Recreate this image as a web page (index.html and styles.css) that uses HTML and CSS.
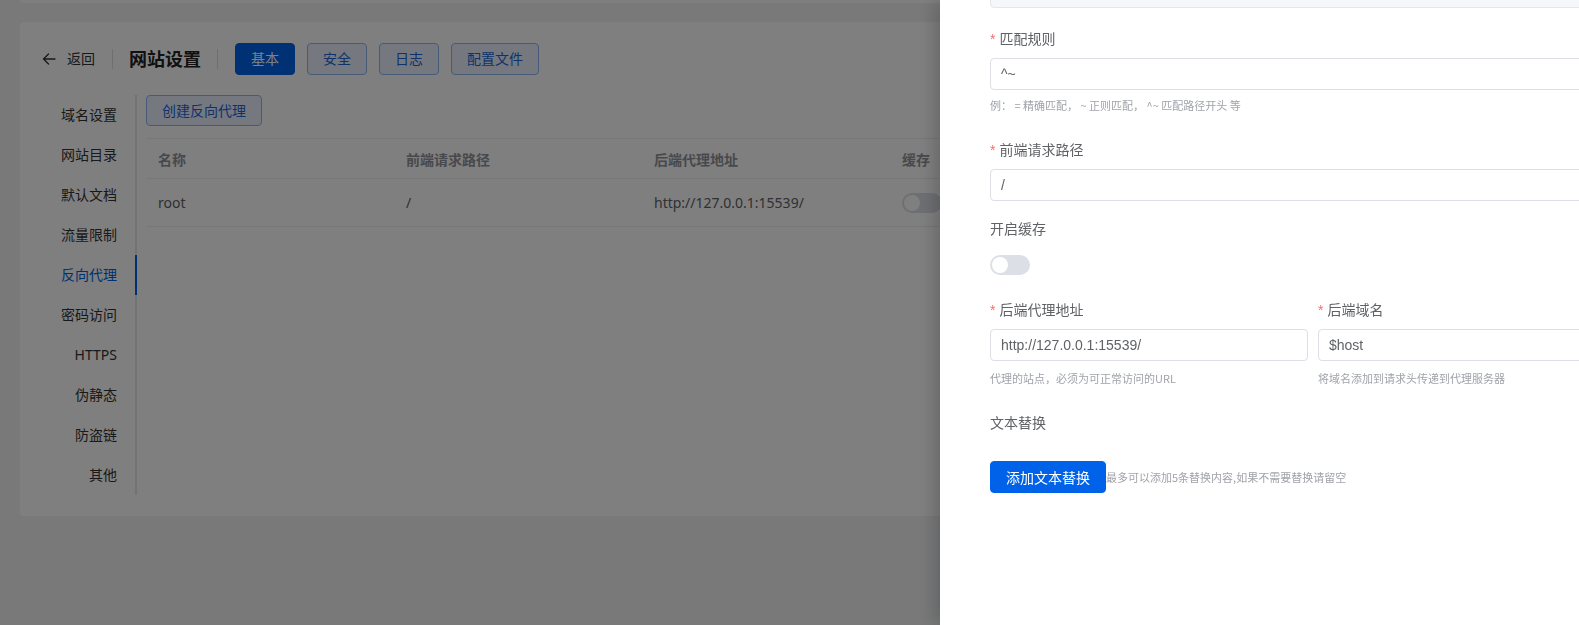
FILE: index.html
```html
<!DOCTYPE html>
<html lang="zh-CN">
<head>
<meta charset="utf-8">
<title>网站设置</title>
<link rel="stylesheet" href="styles.css">
</head>
<body>
<div class="page">
  <div class="card card-top"></div>
  <div class="card main">
    <div class="header">
      <a class="back">
        <svg class="back-icon" width="14" height="14" viewBox="0 0 14 14"><path d="M13 7H1.5M6.5 2L1.5 7l5 5" fill="none" stroke="currentColor" stroke-width="1.3" stroke-linecap="round" stroke-linejoin="round"/></svg>
        <span>返回</span>
      </a>
      <span class="vdiv"></span>
      <h1 class="title">网站设置</h1>
      <span class="vdiv vdiv-2"></span>
      <div class="tabs">
        <button class="btn btn-primary">基本</button>
        <button class="btn btn-plain">安全</button>
        <button class="btn btn-plain">日志</button>
        <button class="btn btn-plain">配置文件</button>
      </div>
    </div>
    <div class="body">
      <ul class="side-menu">
        <li>域名设置</li>
        <li>网站目录</li>
        <li>默认文档</li>
        <li>流量限制</li>
        <li class="active">反向代理</li>
        <li>密码访问</li>
        <li>HTTPS</li>
        <li>伪静态</li>
        <li>防盗链</li>
        <li>其他</li>
      </ul>
      <div class="content">
        <button class="btn btn-plain btn-create">创建反向代理</button>
        <table class="table">
          <thead>
            <tr><th>名称</th><th>前端请求路径</th><th>后端代理地址</th><th>缓存</th><th>操作</th></tr>
          </thead>
          <tbody>
            <tr><td>root</td><td>/</td><td>http://127.0.0.1:15539/</td><td><span class="switch"></span></td><td></td></tr>
          </tbody>
        </table>
      </div>
    </div>
  </div>
</div>
<div class="mask"></div>
<aside class="drawer">
  <div class="drawer-body">
    <div class="form-item item-scrolled">
      <div class="input input-disabled"></div>
    </div>
    <div class="form-item has-hint">
      <div class="label"><span class="star">*</span>匹配规则</div>
      <div class="input">^~</div>
      <div class="hint hint-first">例： = 精确匹配， ~ 正则匹配， ^~ 匹配路径开头 等</div>
    </div>
    <div class="form-item item-path">
      <div class="label"><span class="star">*</span>前端请求路径</div>
      <div class="input">/</div>
    </div>
    <div class="form-item item-switch">
      <div class="label">开启缓存</div>
      <span class="switch switch-drawer"></span>
    </div>
    <div class="form-row has-hint">
      <div class="form-col">
        <div class="label"><span class="star">*</span>后端代理地址</div>
        <div class="input">http://127.0.0.1:15539/</div>
        <div class="hint hint-row">代理的站点，必须为可正常访问的URL</div>
      </div>
      <div class="form-col">
        <div class="label"><span class="star">*</span>后端域名</div>
        <div class="input">$host</div>
        <div class="hint hint-row">将域名添加到请求头传递到代理服务器</div>
      </div>
    </div>
    <div class="form-item">
      <div class="label label-replace">文本替换</div>
      <div class="replace-row">
        <button class="btn btn-primary btn-add">添加文本替换</button>
        <span class="hint-inline">最多可以添加5条替换内容,如果不需要替换请留空</span>
      </div>
    </div>
  </div>
</aside>
</body>
</html>
```
FILE: styles.css
```css
html, body {
  margin: 0;
  padding: 0;
  height: 625px;
  overflow: hidden;
}
body {
  background: #f2f3f5;
  font-family: "Noto Sans", "Noto Sans CJK SC", sans-serif;
  font-size: 14px;
  color: #333;
}
ul { margin: 0; padding: 0; list-style: none; }

.page {
  padding: 0 20px;
}
.card {
  background: #fff;
  border-radius: 4px;
}
.card-top {
  height: 3px;
  border-radius: 0 0 4px 4px;
  margin-bottom: 19px;
}
.main {
  padding: 21px 22px 21px 22px;
}

/* header */
.header {
  display: flex;
  align-items: center;
  height: 32px;
}
.back {
  display: flex;
  align-items: center;
  gap: 11px;
  color: #333;
  font-size: 14px;
  line-height: 20px;
}
.back-icon { display: block; }
.vdiv {
  width: 1px;
  height: 20px;
  background: #dcdfe6;
  margin: 0 16px 0 17px;
}
.vdiv-2 { margin: 0 17px 0 16px; }
.title {
  margin: 0;
  font-size: 18px;
  font-weight: 700;
  color: #222;
  line-height: 24px;
}
.tabs {
  display: flex;
  gap: 12px;
}
.btn {
  height: 32px;
  padding: 0 15px;
  border-radius: 4px;
  font-family: "Noto Sans", "Noto Sans CJK SC", sans-serif;
  font-size: 14px;
  border: 1px solid transparent;
  cursor: pointer;
  line-height: 30px;
}
.btn-primary {
  background: #0062e8;
  border-color: #0062e8;
  color: #fff;
}
.btn-plain {
  background: #eaf2fe;
  border-color: #8fb6f3;
  color: #1b64d8;
}

/* body */
.body {
  display: flex;
  margin-top: 20px;
}
.side-menu {
  width: 93px;
  border-right: 2px solid #e4e7ed;
}
.side-menu li {
  height: 40px;
  line-height: 40px;
  text-align: right;
  padding-right: 18px;
  margin-right: -2px;
  border-right: 2px solid transparent;
  color: #333;
  white-space: nowrap;
}
.side-menu li.active {
  color: #0062e8;
  border-right-color: #0062e8;
}
.content {
  flex: 1;
  margin-left: 9px;
}
.btn-create {
  height: 31px;
  line-height: 29px;
}
.table {
  margin-top: 12px;
  width: 1240px;
  border-collapse: collapse;
  table-layout: fixed;
}
.table th, .table td {
  width: 248px;
  padding: 0 12px;
  text-align: left;
  box-sizing: border-box;
}
.table th {
  height: 40px;
  border-top: 1px solid #ebeef5;
  border-bottom: 1px solid #ebeef5;
  color: #909399;
  font-weight: 600;
}
.table td {
  height: 48px;
  border-bottom: 1px solid #ebeef5;
  color: #606266;
}
.switch {
  display: inline-block;
  position: relative;
  width: 40px;
  height: 20px;
  border-radius: 10px;
  background: #dcdfe6;
  vertical-align: middle;
}
.switch::after {
  content: "";
  position: absolute;
  left: 2px;
  top: 2px;
  width: 16px;
  height: 16px;
  border-radius: 50%;
  background: #fff;
}

/* overlay */
.mask {
  position: fixed;
  inset: 0;
  background: rgba(0, 0, 0, 0.5);
}
.drawer {
  position: fixed;
  top: 0;
  left: 940px;
  width: 760px;
  height: 100%;
  background: #fff;
  box-shadow: -6px 0 16px rgba(0, 0, 0, 0.18);
  font-family: "Liberation Sans", "Noto Sans CJK SC", sans-serif;
  color: #606266;
}
.drawer-body {
  padding: 0 50px;
  width: 646px;
}
.form-item {
  margin-bottom: 19px;
}
.item-scrolled {
  margin-top: -24px;
}
.has-hint {
  margin-bottom: 23px;
}
.item-path {
  margin-bottom: 16px;
}
.item-switch {
  margin-bottom: 23px;
}
.label {
  line-height: 22px;
  margin-bottom: 8px;
  font-size: 14px;
  color: #606266;
  font-family: "Noto Sans CJK SC", sans-serif;
}
.star {
  color: #f56c6c;
  margin-right: 4px;
  font-family: "Liberation Sans", sans-serif;
}
.input {
  height: 32px;
  box-sizing: border-box;
  border: 1px solid #dcdfe6;
  border-radius: 4px;
  padding: 0 11px 0 10px;
  line-height: 30px;
  font-size: 14px;
  color: #606266;
  background: #fff;
}
.input-disabled {
  background: #f5f7fa;
  border-color: #e4e7ed;
}
.hint {
  line-height: 20px;
  font-size: 11px;
  color: #a0a3aa;
  font-family: "Noto Sans CJK SC", sans-serif;
  white-space: nowrap;
}
.hint-first { margin-top: 5px; }
.hint-row { margin-top: 7px; }
.switch-drawer {
  display: block;
  margin-top: 16px;
}
.form-row {
  display: flex;
  gap: 10px;
}
.form-col {
  flex: 1;
  min-width: 0;
}
.label-replace {
  margin-bottom: 28px;
}
.replace-row {
  display: flex;
  align-items: center;
}
.btn-add {
  font-family: "Noto Sans CJK SC", sans-serif;
  width: 116px;
  padding: 0;
  text-align: center;
}
.hint-inline {
  font-size: 11px;
  color: #a0a3aa;
  font-family: "Noto Sans CJK SC", sans-serif;
  white-space: nowrap;
}
```
